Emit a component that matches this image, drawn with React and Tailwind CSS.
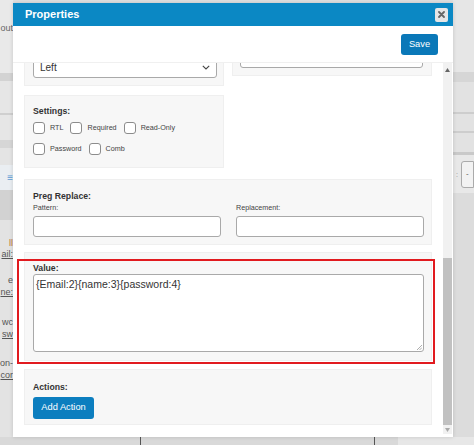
import React from "react";

function Checkbox({ label }) {
  return (
    <div className="flex items-center gap-[5px]">
      <div className="w-[12px] h-[12px] border border-[#8c8c8c] rounded-[3px] bg-white" />
      <span className="text-[7.2px] leading-[10px] text-[#444]">{label}</span>
    </div>
  );
}

function Label({ children }) {
  return <div className="text-[8.7px] leading-[10px] font-bold text-[#333]">{children}</div>;
}

function LeftStrip() {
  return (
    <div className="w-[13px] h-full flex flex-col bg-[#e3e3e3] overflow-hidden text-[9px] text-[#666]">
      <div className="h-[23px] bg-[#e9e9e9]" />
      <div className="h-[10px] flex justify-end whitespace-nowrap leading-[10px] bg-[#e9e9e9]">out</div>
      <div className="h-[40px] bg-[#e9e9e9]" />
      <div className="h-[8px] bg-[#d3d3d3]" />
      <div className="h-[32px] bg-[#e6e6e6]" />
      <div className="h-[2px] bg-[#cfcfcf]" />
      <div className="h-[25px] bg-[#e6e6e6]" />
      <div className="h-[8px] bg-[#d6d6d6]" />
      <div className="h-[17px] bg-[#e4e4e4]" />
      <div className="h-[25px] bg-[#eaeef2] flex justify-end items-center text-[#5b9bd5] text-[10px]">≡</div>
      <div className="h-[30px] bg-[#d2d2d2]" />
      <div className="h-[18px]" />
      <div className="h-[10px] flex justify-end leading-[10px] text-[#c0743a]">ll</div>
      <div className="h-[12px] flex justify-end leading-[12px] text-[#555] underline">ail:</div>
      <div className="h-[14px]" />
      <div className="h-[12px] flex justify-end leading-[12px] text-[#555]">e</div>
      <div className="h-[12px] flex justify-end leading-[12px] text-[#555] underline">ne:</div>
      <div className="h-[18px]" />
      <div className="h-[12px] flex justify-end leading-[12px] text-[#555] whitespace-nowrap">wc</div>
      <div className="h-[12px] flex justify-end leading-[12px] text-[#555] underline whitespace-nowrap">sw</div>
      <div className="h-[17px]" />
      <div className="h-[12px] flex justify-end leading-[12px] text-[#555] whitespace-nowrap">on-</div>
      <div className="h-[12px] flex justify-end leading-[12px] text-[#555] underline whitespace-nowrap">cor</div>
      <div className="flex-1" />
    </div>
  );
}

function RightStrip() {
  return (
    <div className="w-[21px] h-full flex flex-col bg-[#dcdcdc] overflow-hidden">
      <div className="h-[72px] bg-[#e6e6e6]" />
      <div className="h-[10px] bg-[#d6d6d6]" />
      <div className="h-[30px] bg-[#e2e2e2]" />
      <div className="h-[2px] bg-[#cdcdcd]" />
      <div className="h-[17px] bg-[#e2e2e2]" />
      <div className="h-[2px] bg-[#cdcdcd]" />
      <div className="h-[19px] bg-[#e2e2e2]" />
      <div className="h-[3px] bg-[#c9c9c9]" />
      <div className="h-[38px] bg-[#e8e8e8] flex items-center pl-[3px] gap-[3px]">
        <span className="text-[7px] text-[#888] leading-none">:</span>
        <div className="h-[27px] flex-1 border border-[#aaa] rounded-l-[3px] bg-[#f2f2f2] flex items-center pl-[4px] text-[8px] text-[#555]">-</div>
      </div>
      <div className="flex-1 bg-[#dcdcdc]" />
    </div>
  );
}

function Scrollbar() {
  return (
    <div className="w-[9px] mr-[1px] flex flex-col bg-[#f1f1f1]">
      <div className="h-[14px] flex items-center justify-center">
        <svg width="5" height="4" viewBox="0 0 5 4"><path d="M0 4 L2.5 0 L5 4 Z" fill="#666" /></svg>
      </div>
      <div className="h-[181px]" />
      <div className="h-[167px] bg-[#c1c1c1]" />
      <div className="flex-1 flex items-center justify-center">
        <svg width="5" height="4" viewBox="0 0 5 4"><path d="M0 0 L2.5 4 L5 0 Z" fill="#aaa" /></svg>
      </div>
    </div>
  );
}

function Modal() {
  return (
    <div className="absolute left-[13px] top-[3px] w-[440px] h-[434px] bg-white flex flex-col pb-[3px] shadow-[0_0_4px_rgba(0,0,0,0.15)]">
      <div className="h-[23px] bg-[#0b88c4] flex items-center justify-between pl-[12px] pr-[5px]">
        <span className="text-white font-bold text-[11px] leading-none">Properties</span>
        <div className="w-[13px] h-[14px] bg-[#e6e6e6] rounded-[2px] flex items-center justify-center">
          <svg width="7" height="7" viewBox="0 0 7 7">
            <path d="M1 1 L6 6 M6 1 L1 6" stroke="#666" strokeWidth="1.8" strokeLinecap="round" />
          </svg>
        </div>
      </div>
      <div className="h-[37px] flex justify-end items-start pt-[8px] pr-[15px] border-b border-[#f0f0f0]">
        <button className="h-[21px] w-[37px] rounded-[3px] bg-[#0a78b8] text-white text-[9.3px] leading-none">Save</button>
      </div>
      <div className="flex-1 flex min-h-0">
        <div className="flex-1 overflow-hidden px-[11px]">
          <div className="-mt-[24px] flex flex-col">
            <div className="flex gap-[8px] items-start">
              <div className="w-[200px] h-[47px] bg-[#f7f7f7] border border-[#efefef] pt-[17px] pl-[8px] pr-[6px]">
                <div className="h-[21px] border border-[#a9a9a9] rounded-[3px] bg-white flex items-center justify-between pl-[6px] pr-[6px]">
                  <span className="text-[10px] text-[#333] leading-none">Left</span>
                  <svg width="8" height="5" viewBox="0 0 8 5">
                    <path d="M0.8 0.8 L4 4 L7.2 0.8" stroke="#444" strokeWidth="1.1" fill="none" />
                  </svg>
                </div>
              </div>
              <div className="w-[200px] h-[37px] bg-[#f7f7f7] border border-[#efefef] pt-[7px] pl-[7px] pr-[8px]">
                <div className="h-[21px] border border-[#a9a9a9] rounded-[3px] bg-white" />
              </div>
            </div>

            <div className="w-[200px] mt-[9px] h-[73px] bg-[#f7f7f7] border border-[#efefef] pt-[10px] px-[8px] flex flex-col">
              <Label>Settings:</Label>
              <div className="mt-[6px] flex items-center gap-[7px]">
                <Checkbox label="RTL" />
                <Checkbox label="Required" />
                <Checkbox label="Read-Only" />
              </div>
              <div className="mt-[9px] flex items-center gap-[7px]">
                <Checkbox label="Password" />
                <Checkbox label="Comb" />
              </div>
            </div>

            <div className="mt-[11px] h-[66px] bg-[#f7f7f7] border border-[#efefef] pt-[11px] pl-[8px] pr-[7px] flex flex-col">
              <Label>Preg Replace:</Label>
              <div className="mt-[3px] grid grid-cols-2 gap-[15px]">
                <div className="flex flex-col">
                  <span className="text-[7.2px] leading-[8px] text-[#444]">Pattern:</span>
                  <div className="mt-[4px] h-[21px] border border-[#a9a9a9] rounded-[3px] bg-white" />
                </div>
                <div className="flex flex-col">
                  <span className="text-[7.2px] leading-[8px] text-[#444]">Replacement:</span>
                  <div className="mt-[4px] h-[21px] border border-[#a9a9a9] rounded-[3px] bg-white" />
                </div>
              </div>
            </div>

            <div className="relative mt-[7px] h-[109px] bg-[#f7f7f7] border border-[#efefef] pt-[10px] pl-[8px] pr-[7px] flex flex-col">
              <Label>Value:</Label>
              <div className="relative mt-[1px] h-[78px] border border-[#a9a9a9] rounded-[3px] bg-white pl-[2px] pt-[3px] text-[10.5px] leading-[12px] text-[#333]">
                {"{Email:2}{name:3}{password:4}"}
                <svg className="absolute right-[1px] bottom-[1px]" width="6" height="6" viewBox="0 0 6 6">
                  <path d="M1 6 L6 1 M3.5 6 L6 3.5" stroke="#999" strokeWidth="0.8" />
                </svg>
              </div>
              <div className="absolute top-[6px] left-[-8px] right-[-4px] bottom-[-4px] border-2 border-[#e11a1f] pointer-events-none" />
            </div>

            <div className="mt-[8px] h-[56px] bg-[#f7f7f7] border border-[#efefef] pt-[12px] pl-[8px] flex flex-col items-start">
              <Label>Actions:</Label>
              <button className="mt-[5px] h-[22px] w-[61px] rounded-[3px] bg-[#0c7ebf] text-white text-[9.3px] leading-none">Add Action</button>
            </div>
          </div>
        </div>
        <Scrollbar />
      </div>
    </div>
  );
}

export default function App() {
  return (
    <div className="relative w-[474px] h-[445px] overflow-hidden bg-[#dedede] font-['Liberation_Sans',Arial,sans-serif]">
      <div className="flex flex-col h-full">
        <div className="h-[437px] flex">
          <LeftStrip />
          <div className="w-[440px] bg-[#e0e0e0]" />
          <RightStrip />
        </div>
        <div className="flex-1 flex">
          <div className="w-[398px] bg-[#d9d9d9] flex">
            <div className="w-[140px]" />
            <div className="w-[1px] bg-[#555]" />
            <div className="w-[233px]" />
            <div className="w-[1px] bg-[#555]" />
          </div>
          <div className="flex-1 bg-[#e7e7e7]" />
        </div>
      </div>
      <Modal />
    </div>
  );
}
